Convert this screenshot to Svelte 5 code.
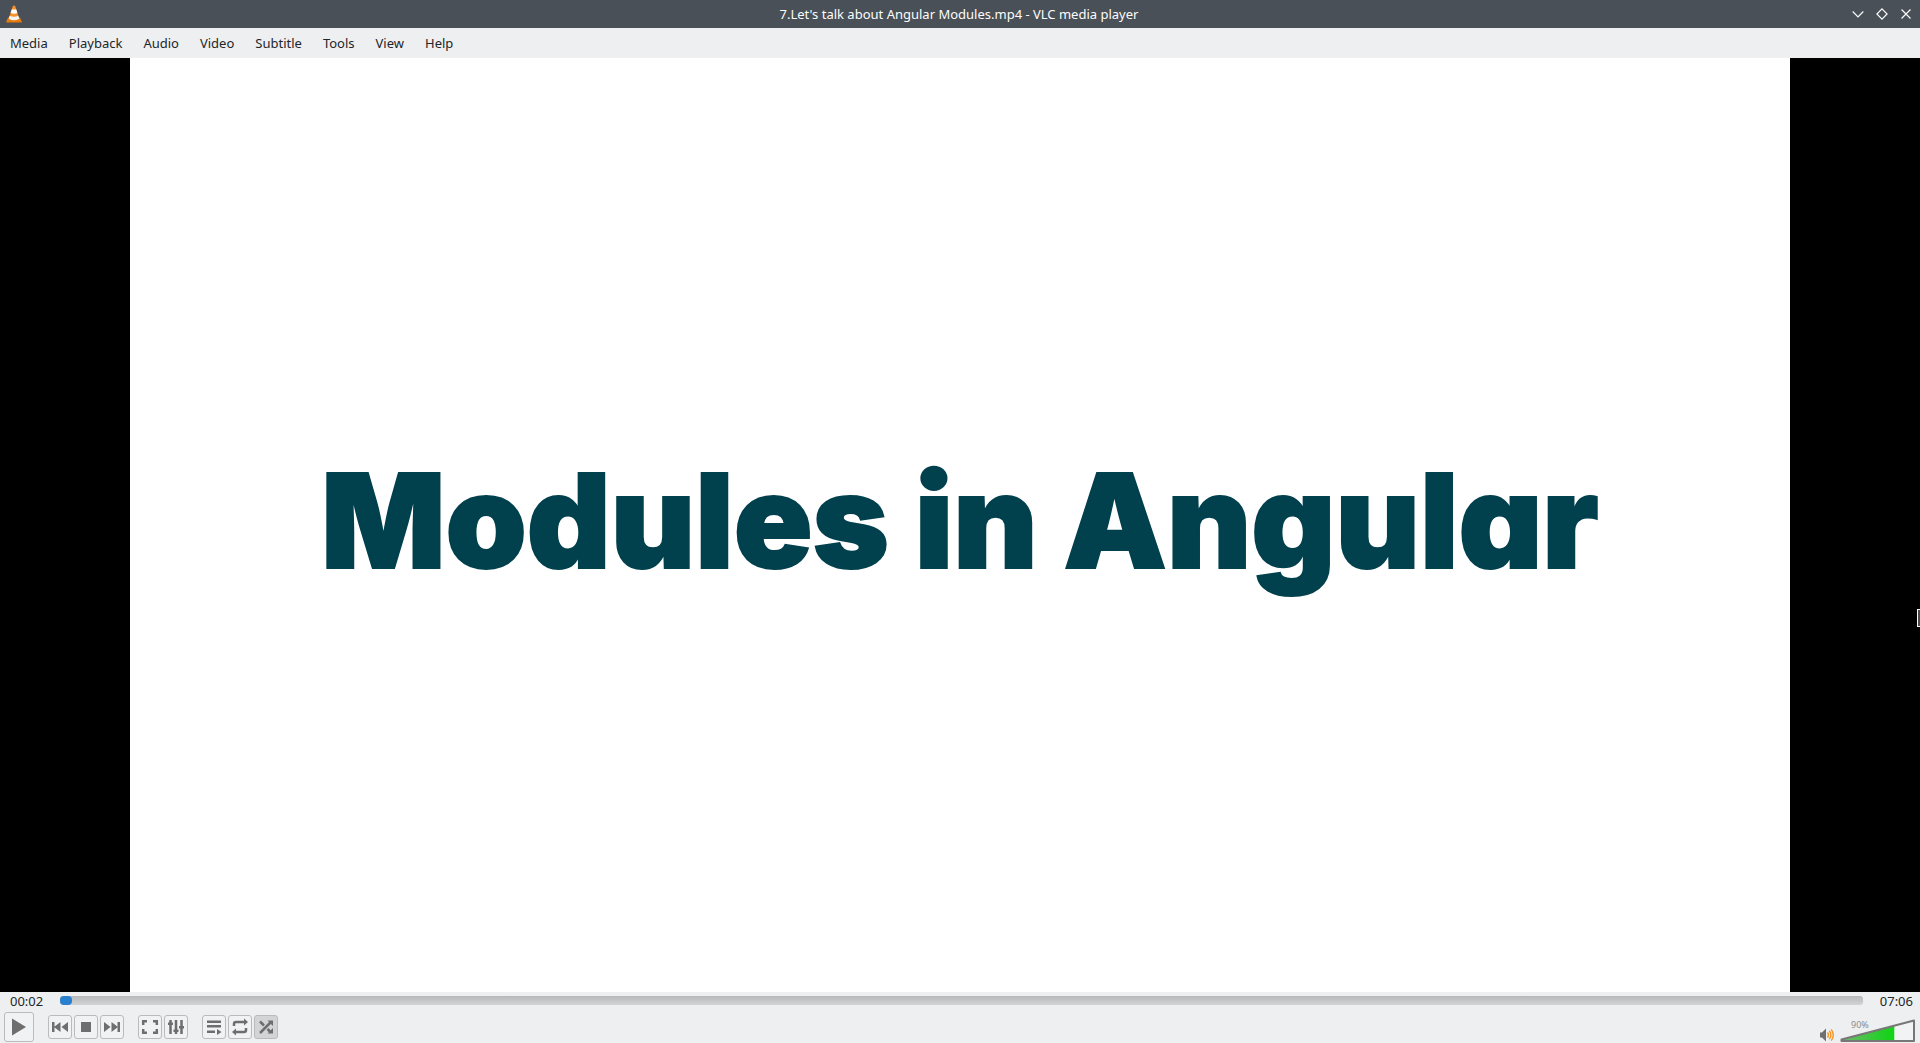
<script lang="ts">
  interface Control {
    name: string;
    label: string;
  }

  const menus: string[] = ['Media', 'Playback', 'Audio', 'Video', 'Subtitle', 'Tools', 'View', 'Help'];

  const groups: Control[][] = [
    [
      { name: 'previous', label: 'Previous' },
      { name: 'stop', label: 'Stop' },
      { name: 'next', label: 'Next' },
    ],
    [
      { name: 'fullscreen', label: 'Fullscreen' },
      { name: 'settings', label: 'Extended settings' },
    ],
    [
      { name: 'playlist', label: 'Playlist' },
      { name: 'loop', label: 'Loop' },
      { name: 'random', label: 'Random' },
    ],
  ];

  const duration = 426;
  let position = $state(2.8);
  let volume = $state(90);
  let random = $state(true);

  // The volume scale goes up to 125%
  let volumeEdge = $derived(1 + (volume / 125) * 74);

  function formatTime(seconds: number): string {
    const m = Math.floor(seconds / 60);
    const s = Math.floor(seconds % 60);
    return `${String(m).padStart(2, '0')}:${String(s).padStart(2, '0')}`;
  }

  function handleClick(name: string): void {
    if (name === 'random') random = !random;
    if (name === 'stop' || name === 'previous') position = 0;
  }
</script>

<div class="player">
  <header class="titlebar">
    <svg class="cone" width="16" height="20" viewBox="1 0 16 20" aria-hidden="true">
      <path d="M3 13.5h12l1.8 4.2q.2.8-.8.8H2q-1 0-.8-.8z" fill="#e67a0c" />
      <path d="M7.8 2q1.2-.8 2.4 0l4 12.5q-5.200 3-10.400 0z" fill="#f7912a" />
      <path d="M6.700 5.500h4.600l1.100 3.500q-3.400 1.400-6.800 0z" fill="#fff" />
      <path d="M4.700 11.800q4.300 1.800 8.600 0l1 2.900q-5.300 3-10.600 0z" fill="#f5f5f5" />
    </svg>
    <h1>7.Let's talk about Angular Modules.mp4 - VLC media player</h1>
    <div class="window-buttons">
      <button aria-label="Minimize">
        <svg width="12" height="12" viewBox="0 0 12 12"><path d="M.7 3.500 6 8.800l5.300-5.300" /></svg>
      </button>
      <button aria-label="Maximize">
        <svg width="12" height="12" viewBox="0 0 12 12"><path d="M6 .9 11.100 6 6 11.100.9 6z" /></svg>
      </button>
      <button aria-label="Close">
        <svg width="12" height="12" viewBox="0 0 12 12"><path d="m1.500 1.500 9 9m0-9-9 9" /></svg>
      </button>
    </div>
  </header>

  <nav class="menubar">
    {#each menus as menu}
      <button>{menu}</button>
    {/each}
  </nav>

  <main class="video">
    <div class="frame">
      <h2>Modules in Angular</h2>
    </div>
    <span class="cursor"></span>
  </main>

  <footer>
    <div class="timeline">
      <span>{formatTime(position)}</span>
      <div class="seek">
        <div class="seek-fill" style="width: {(position / duration) * 100}%"></div>
        <input type="range" min="0" max={duration} step="0.1" bind:value={position} aria-label="Seek" />
      </div>
      <span>{formatTime(duration)}</span>
    </div>

    <div class="controls">
      <button class="play" aria-label="Play">
        <svg width="16" height="18" viewBox="0 0 16 18"><path d="M1 .5v17l14-8.500z" /></svg>
      </button>

      {#each groups as group}
        <div class="group">
          {#each group as { name, label }}
            <button
              class:active={name === 'random' && random}
              aria-label={label}
              onclick={() => handleClick(name)}
            >
              <svg width="18" height="18" viewBox="0 0 18 18">
                {#if name === 'previous'}
                  <path d="M1 4h2.500v10H1zM9.500 4v10L3 9zM17 4v10l-6.500-5z" />
                {:else if name === 'stop'}
                  <path d="M4 4h10v10H4z" />
                {:else if name === 'next'}
                  <path d="M14.500 4H17v10h-2.500zM8.500 4v10L15 9zM1 4v10l6.500-5z" />
                {:else if name === 'fullscreen'}
                  <path class="line" d="M2.200 7V3.200H6M12 3.200h3.800V7M15.800 11v3.800H12M6 14.800H2.200V11" />
                {:else if name === 'settings'}
                  <path class="line" d="M3.500 2v14M9 2v14M14.500 2v14" />
                  <path d="M1 4.500h5v2.500H1zM6.500 11.500h5V14h-5zM12 8h5v2.500h-5z" />
                {:else if name === 'playlist'}
                  <path d="M2 2.500h14V5H2zM2 7h14v2.500H2zM2 12.500h8V15H2zM12 11v6l4.500-3z" />
                {:else if name === 'loop'}
                  <path class="line" d="M3 8V6q0-2 2-2h9M15 10v2q0 2-2 2H4" />
                  <path d="M13 .5v7L17 4zM5 10.500v7L1 14z" />
                {:else}
                  <path class="line" d="M3 15 13.500 4.500M3 3.500l4 4M10.500 11l3 3" />
                  <path d="M10.500 2.500H16V8zM16 10v5.500h-5.500z" />
                {/if}
              </svg>
            </button>
          {/each}
        </div>
      {/each}

      <div class="volume">
        <button class="mute" aria-label="Mute">
          <svg width="16" height="14" viewBox="0 0 16 14">
            <path d="M0 4.500h2l4-4v13l-4-4H0z" />
            <path class="wave" d="M7.500 4.500q1.800 2.500 0 5M9.300 2.800q3.200 4.200 0 8.400M11.200 1.300q4.200 5.700 0 11.400" />
          </svg>
        </button>
        <div class="volume-slider">
          <svg width="76" height="24" viewBox="0 0 76 24" aria-hidden="true">
            <defs>
              <linearGradient id="volume-fill" x1="0" x2="1">
                <stop offset="0" stop-color="#70b870" />
                <stop offset="0.65" stop-color="#17d21b" />
              </linearGradient>
              <clipPath id="volume-level">
                <rect width={volumeEdge} height="24" />
              </clipPath>
            </defs>
            <path class="empty" d="M1.500 20.500 74 1.500v20.500H1.500z" />
            <path class="level" d="M1.500 20.500 74 1.500v20.500H1.500z" clip-path="url(#volume-level)" />
            <path class="outline" d="M1.500 20.500 74 1.500v20.500H1.500z" />
          </svg>
          <output>{volume}%</output>
          <input type="range" min="0" max="125" bind:value={volume} aria-label="Volume" />
        </div>
      </div>
    </div>
  </footer>
</div>

<style>
  :global(body) {
    margin: 0;
    font-family: 'Noto Sans', sans-serif;
    font-size: 13px;
    color: #232629;
  }

  .player {
    display: flex;
    flex-direction: column;
    height: 100vh;
    background: #eeeff1;
  }

  button {
    display: flex;
    align-items: center;
    justify-content: center;
    box-sizing: border-box;
    padding: 0;
    border: none;
    background: none;
    font: inherit;
    color: inherit;
  }

  .titlebar {
    display: grid;
    grid-template-columns: 1fr auto 1fr;
    align-items: center;
    height: 28px;
    padding: 0 8px 0 6px;
    background: #495057;
    color: #fcfcfc;
  }

  h1 {
    margin: 0;
    font-size: 13px;
    font-weight: 400;
  }

  .window-buttons {
    display: flex;
    justify-content: flex-end;
    gap: 12px;
  }

  .window-buttons svg {
    fill: none;
    stroke: #fcfcfc;
    stroke-width: 1.2;
  }

  .menubar {
    display: flex;
    gap: 1px;
    height: 30px;
  }

  .menubar button {
    padding: 0 10px;
  }

  .menubar button:hover {
    background: #d5e6f2;
  }

  .video {
    position: relative;
    display: flex;
    justify-content: center;
    flex: 1;
    min-height: 0;
    background: #000;
  }

  .frame {
    display: flex;
    align-items: center;
    justify-content: center;
    height: 100%;
    aspect-ratio: 16 / 9;
    background: #fff;
  }

  /* cv11 is Inter's single-storey a */
  h2 {
    margin: 0;
    padding-bottom: 8px;
    font-family: Inter, sans-serif;
    font-size: 130px;
    font-weight: 900;
    font-feature-settings: 'cv11';
    line-height: 1;
    white-space: nowrap;
    color: #01404d;
    -webkit-text-stroke: 2px #01404d;
  }

  .cursor {
    position: absolute;
    top: 59%;
    right: 0;
    width: 2px;
    height: 16px;
    border: 1px solid #fff;
    border-right: none;
    background: #4a4a4a;
  }

  .timeline {
    display: flex;
    align-items: center;
    justify-content: space-between;
    height: 18px;
    padding: 0 7px 0 10px;
    gap: 17px;
  }

  .seek {
    position: relative;
    flex: 1;
    height: 9px;
    margin-bottom: 1px;
    border-radius: 3px;
    background: linear-gradient(#b6b8b9, #d2d4d5);
  }

  .seek-fill {
    height: 9px;
    border-radius: 4px;
    background: #2980cf;
  }

  .seek input,
  .volume-slider input {
    position: absolute;
    inset: 0;
    width: 100%;
    height: 100%;
    margin: 0;
    opacity: 0;
  }

  .controls {
    display: flex;
    align-items: center;
    gap: 14px;
    height: 33px;
    padding: 0 4px;
  }

  .controls button {
    width: 24px;
    height: 24px;
    border: 1px solid #b9bbbc;
    border-radius: 3px;
    background: #f1f2f3;
  }

  .controls .play {
    width: 30px;
    height: 30px;
  }

  .controls button.active {
    background: #d3d4d5;
  }

  .controls svg {
    flex: none;
    fill: #6e6e6e;
  }

  .controls .line {
    fill: none;
    stroke: #6e6e6e;
    stroke-width: 2.5;
  }

  .group {
    display: flex;
    gap: 2px;
  }

  .volume {
    display: flex;
    align-items: flex-end;
    align-self: flex-end;
    gap: 4px;
    margin-left: auto;
  }

  .controls .mute {
    width: 16px;
    height: 16px;
    border: none;
    background: none;
  }

  .controls .wave {
    fill: none;
    stroke: #f8941d;
    stroke-width: 1.4;
  }

  .volume-slider {
    position: relative;
    height: 24px;
  }

  .volume-slider svg {
    display: block;
  }

  .empty {
    fill: #f2f3f4;
  }

  .level {
    fill: url(#volume-fill);
  }

  .controls .outline {
    fill: none;
    stroke: #777;
    stroke-width: 2;
    stroke-linejoin: round;
  }

  output {
    position: absolute;
    top: 0;
    left: 11px;
    font-size: 9px;
    line-height: 12px;
    color: #8a8c8e;
  }
</style>
